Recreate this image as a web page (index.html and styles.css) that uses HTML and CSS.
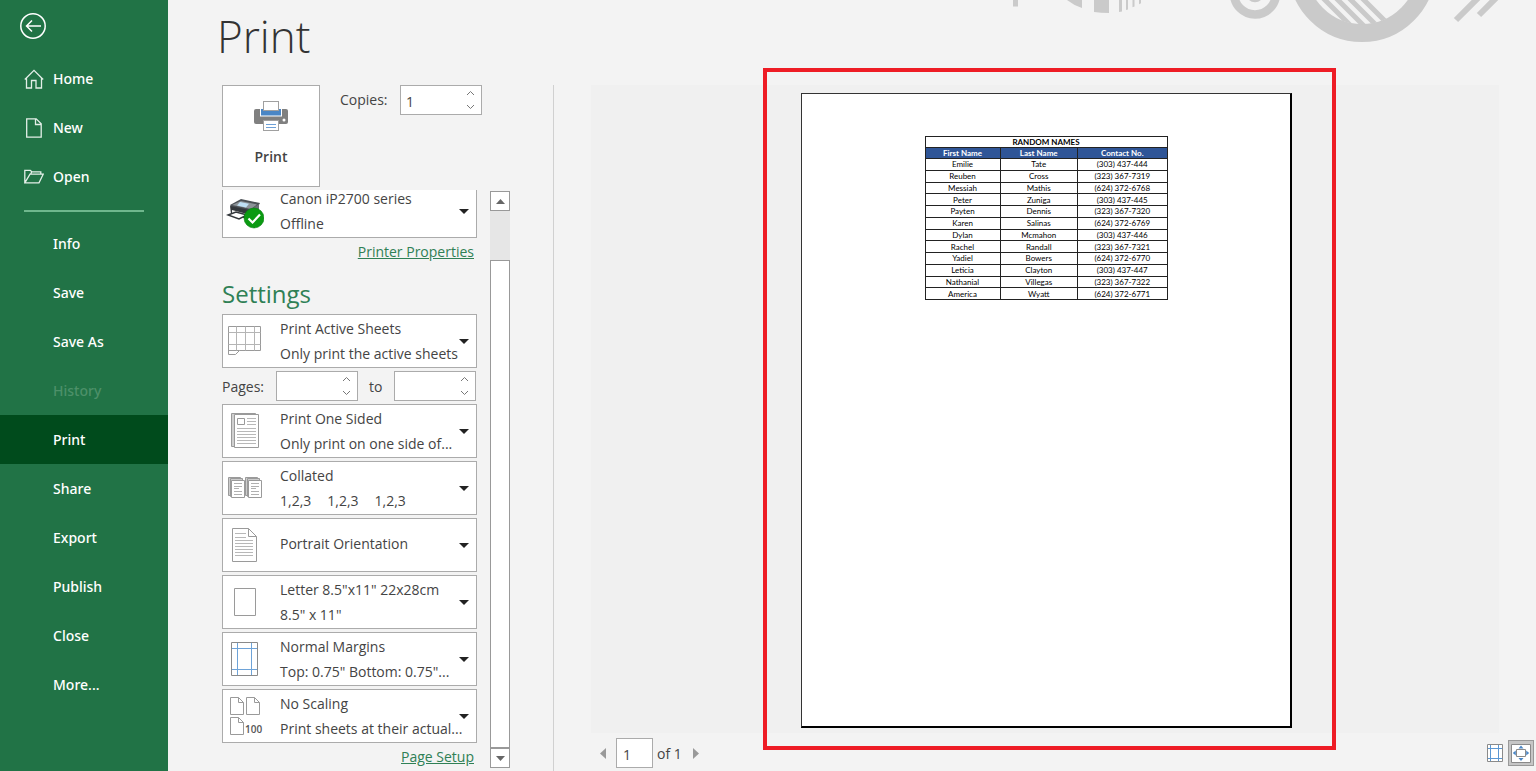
FILE: index.html
```html
<!DOCTYPE html>
<html lang="en">
<head>
<meta charset="UTF-8" />
<meta name="viewport" content="width=device-width, initial-scale=1" />
<title>Print</title>
<link rel="stylesheet" href="styles.css">
</head>
<body>

  <!-- Sidebar -->
  <nav class="sidebar">
    <button class="back" type="button" aria-label="Back">
      <svg width="28" height="28" viewBox="0 0 28 28" fill="none" stroke="#fff" stroke-width="1.5">
        <circle cx="14" cy="14" r="12.2" />
        <path d="M22 14H7.5M13 8.5L7.5 14l5.500 5.500" />
      </svg>
    </button>
    <a class="nav-item" href="#">
      <svg width="20" height="20" viewBox="0 0 20 20" fill="none" stroke="#e3efe8" stroke-width="1.3">
        <path d="M.8 10.500L10 1.300l9.200 9.200M2.500 9v10h5v-7.500h4.500V19h5.500V9" />
      </svg>
      Home
    </a>
    <a class="nav-item" href="#">
      <svg width="20" height="20" viewBox="0 0 20 20" fill="none" stroke="#e3efe8" stroke-width="1.3">
        <path d="M2.700.8h9.500l5 5v13.400H2.700zM11.500.8v5.700h5.700" />
      </svg>
      New
    </a>
    <a class="nav-item" href="#">
      <svg width="20" height="20" viewBox="0 0 20 20" fill="none" stroke="#e3efe8" stroke-width="1.3">
        <path d="M.8 15.800V3.300h5.500l1.500 1.500h9v2.400M.8 15.800L6 7.200h13.200L15 15.800zM6.500 7.200l1.300-2.400" />
      </svg>
      Open
    </a>
    <hr class="divider">
    <a class="nav-item sub" href="#">Info</a>
    <a class="nav-item sub" href="#">Save</a>
    <a class="nav-item sub" href="#">Save As</a>
    <a class="nav-item sub disabled" aria-disabled="true">History</a>
    <a class="nav-item sub active" href="#" aria-current="page">Print</a>
    <a class="nav-item sub" href="#">Share</a>
    <a class="nav-item sub" href="#">Export</a>
    <a class="nav-item sub" href="#">Publish</a>
    <a class="nav-item sub" href="#">Close</a>
    <a class="nav-item sub" href="#">More...</a>
  </nav>

  <main class="main">
    <header class="header">
      <h1>Print</h1>
      <svg class="deco" width="546" height="46" viewBox="0 0 546 46" fill="#cacaca" aria-hidden="true">
        <defs>
          <clipPath id="ring"><circle cx="372" cy="-31.500" r="56" /></clipPath>
        </defs>
        <rect x="23" y="0" width="5" height="6.500" />
        <path d="M77 0h15v8Q84 5.500 77 0zM104 0h15v13q-8 0-15-1zM129 0h3v11.500l-3 .6zM136 0h2v9.500l-2 .6zM142.500 0h2v6.500l-2 .8zM149 0h2v3.300l-2 1z" />
        <circle cx="265" cy="-6.500" r="21" fill="none" stroke="#cacaca" stroke-width="8.500" />
        <circle cx="265" cy="-6.500" r="8.800" />
        <circle cx="372" cy="-31.500" r="64.500" fill="none" stroke="#cacaca" stroke-width="18" />
        <g clip-path="url(#ring)" stroke="#cacaca" stroke-width="5">
          <path d="M325-10l50 50M338-10l50 50M351-10l50 50M364-10l50 50" />
        </g>
        <path d="M466 20l25-25M489 15l22-22" stroke="#cacaca" stroke-width="6" />
      </svg>
    </header>

    <div class="content">
      <!-- Print settings -->
      <form class="panel">
        <div class="print-row">
          <button class="print-btn" type="button">
            <svg width="34" height="32" viewBox="0 0 34 32">
              <rect x="0" y="9" width="34" height="15" rx="2" fill="#808080" />
              <path d="M6 9h22v7.500H6z" fill="#fff" />
              <path d="M7 9h20v6.500H7z" fill="#4a86c5" />
              <rect x="9.500" y="1.500" width="15" height="9" fill="#fff" stroke="#a0a0a0" />
              <rect x="9.500" y="20.500" width="15" height="10" fill="#fff" stroke="#a0a0a0" />
              <path d="M12 24.500h10M12 27.500h10" stroke="#6d9fd6" />
              <circle cx="30" cy="20" r="1.500" fill="#fff" />
            </svg>
            <span>Print</span>
          </button>
          <label class="copies-label" for="copies">Copies:</label>
          <div class="spin">
            <input id="copies" type="text" inputmode="numeric" value="1">
            <svg width="9" height="20" viewBox="0 0 9 20"><path d="M1 5l3.500-3.500L8 5M1 15l3.500 3.500L8 15" /></svg>
          </div>
        </div>

        <div class="scroll-area">
          <div class="options">
            <div class="option printer">
              <svg class="icon" width="38" height="38" viewBox="0 -5 38 38">
                <path d="M4 8L15 2l19 4-6 11-21-4z" fill="#4c5156" />
                <path d="M6 8l9-4 16 3.500-6 4.500z" fill="#8d9398" />
                <path d="M14 5l9 1.800-3 3.700-9-2z" fill="#bfe0f5" />
                <path d="M4 9l20 4v10L5 17z" fill="#33373b" />
                <path d="M24 13l9-6v10l-9 6z" fill="#6a6f74" />
                <path d="M6 13l15 4v3L6 16z" fill="#f4f4f4" />
                <path d="M2 18l8-3 11 3-8 4z" fill="#fff" stroke="#33373b" stroke-width="1.500" />
                <circle cx="28" cy="21" r="10" fill="#0b9a12" stroke="#078010" stroke-width=".6" />
                <path d="M22.500 21.500l4 4 7.500-8" fill="none" stroke="#fff" stroke-width="2.200" />
              </svg>
              <select aria-label="Printer" aria-describedby="d-printer"><option>Canon iP2700 series</option></select>
              <span class="desc" id="d-printer">Offline</span>
            </div>
            <a class="link" href="#">Printer Properties</a>

            <h2>Settings</h2>

            <div class="option">
              <svg class="icon" width="38" height="38" viewBox="0 0 38 38" fill="none" stroke="#9a9a9a">
                <path d="M2.500 4.500h32v24h-21l-4 4h-7zM2.500 28.500h11" />
                <path d="M2.500 10.500h32M2.500 22.500h32M10.500 4.500v24M19.500 4.500v24M28.500 4.500v24" stroke="#b5b5b5" />
              </svg>
              <select aria-label="Print what" aria-describedby="d-what"><option>Print Active Sheets</option></select>
              <span class="desc" id="d-what">Only print the active sheets</span>
            </div>

            <div class="pages-row">
              <label for="page-from">Pages:</label>
              <div class="spin">
                <input id="page-from" type="text" inputmode="numeric">
                <svg width="9" height="20" viewBox="0 0 9 20"><path d="M1 5l3.500-3.500L8 5M1 15l3.500 3.500L8 15" /></svg>
              </div>
              <label for="page-to">to</label>
              <div class="spin">
                <input id="page-to" type="text" inputmode="numeric">
                <svg width="9" height="20" viewBox="0 0 9 20"><path d="M1 5l3.500-3.500L8 5M1 15l3.500 3.500L8 15" /></svg>
              </div>
            </div>

            <div class="option">
              <svg class="icon" width="38" height="38" viewBox="0 0 38 38" fill="none" stroke="#9a9a9a">
                <path d="M8.500 34.500h-3v-33h24l2 2" fill="#d0d0d0" />
                <path d="M8.500 2.500h24v33h-24z" fill="#fff" />
                <path d="M11.500 6.500h7v6h-7z" />
                <path d="M21 6.500h9M21 9.500h9M21 12.500h9M11 16.500h19M11 19.500h19M11 22.500h19M11 25.500h19M11 28.500h19M11 31.500h19" stroke="#b8b8b8" />
              </svg>
              <select aria-label="Sides" aria-describedby="d-sides"><option>Print One Sided</option></select>
              <span class="desc" id="d-sides">Only print on one side of...</span>
            </div>

            <div class="option">
              <svg class="icon" width="38" height="38" viewBox="0 0 38 38" fill="none" stroke="#9a9a9a">
                <path d="M2.500 26.500v-18h12v18zM19.500 26.500v-18h12v18z" fill="#ccc" />
                <path d="M4.500 9.500h12v18h-12zM21.500 9.500h12v18h-12z" fill="#ccc" />
                <path d="M5.500 11.500h13v17h-13zM22.500 11.500h13v17h-13z" fill="#fff" />
                <path d="M8 14.500h8M8 17.500h8M8 19.500h5M8 22.500h8M8 25.500h8M25 14.500h8M25 17.500h8M25 19.500h5M25 22.500h8M25 25.500h8" stroke="#b0b0b0" />
              </svg>
              <select aria-label="Collation" aria-describedby="d-collation"><option>Collated</option></select>
              <span class="desc sets" id="d-collation"><span>1,2,3</span><span>1,2,3</span><span>1,2,3</span></span>
            </div>

            <div class="option single">
              <svg class="icon" width="38" height="38" viewBox="0 0 38 38" fill="none" stroke="#9a9a9a">
                <path d="M6.500 2.500h16l8 8v25h-24zM22.500 2.500v8h8" />
                <path d="M9 7.500h11M9 11.500h11M9 14.500h18M9 17.500h18M9 20.500h18M9 23.500h18M9 26.500h18M9 29.500h18" stroke="#b8b8b8" />
              </svg>
              <select aria-label="Orientation"><option>Portrait Orientation</option></select>
            </div>

            <div class="option">
              <svg class="icon" width="38" height="38" viewBox="0 0 38 38" fill="none" stroke="#9a9a9a">
                <path d="M8.500 5.500h21v27h-21z" />
              </svg>
              <select aria-label="Paper size" aria-describedby="d-paper"><option>Letter 8.5"x11" 22x28cm</option></select>
              <span class="desc" id="d-paper">8.5" x 11"</span>
            </div>

            <div class="option">
              <svg class="icon" width="38" height="38" viewBox="0 0 38 38" fill="none" stroke="#8a8a8a">
                <path d="M6 8.500h25M6 29.500h25M11.500 3v32M25.500 3v32" stroke="#6ea3d8" />
                <path d="M5.500 2.500h26v33h-26z" />
              </svg>
              <select aria-label="Margins" aria-describedby="d-margins"><option>Normal Margins</option></select>
              <span class="desc" id="d-margins">Top: 0.75" Bottom: 0.75"...</span>
            </div>

            <div class="option">
              <svg class="icon" width="38" height="38" viewBox="0 0 38 38" fill="none" stroke="#9a9a9a">
                <path d="M4.500.500h8l5 5v12h-13zM12.500.500v5h5M20.500.500h8l5 5v12h-13zM28.500.500v5h5M4.500 20.500h8l5 5v12h-13zM12.500 20.500v5h5" />
                <text x="19" y="36" font-size="10" font-weight="600" fill="#555" stroke="none">100</text>
              </svg>
              <select aria-label="Scaling" aria-describedby="d-scaling"><option>No Scaling</option></select>
              <span class="desc" id="d-scaling">Print sheets at their actual...</span>
            </div>
            <a class="link" href="#">Page Setup</a>
          </div>

          <div class="scrollbar">
            <button type="button" aria-label="Scroll up"><svg width="9" height="5" viewBox="0 0 9 5"><path d="M0 5L4.500 0 9 5z" /></svg></button>
            <div class="track"><div class="thumb"></div></div>
            <button type="button" aria-label="Scroll down"><svg width="9" height="5" viewBox="0 0 9 5"><path d="M0 0l4.500 5L9 0z" /></svg></button>
          </div>
        </div>
      </form>

      <!-- Preview -->
      <section class="preview">
        <div class="canvas">
          <div class="page">
            <table>
              <colgroup>
                <col class="first">
                <col class="last">
                <col>
              </colgroup>
              <thead>
                <tr><th colspan="3">RANDOM NAMES</th></tr>
                <tr class="cols"><th>First Name</th><th>Last Name</th><th>Contact No.</th></tr>
              </thead>
              <tbody>
                <tr><td>Emilie</td><td>Tate</td><td>(303) 437-444</td></tr>
                <tr><td>Reuben</td><td>Cross</td><td>(323) 367-7319</td></tr>
                <tr><td>Messiah</td><td>Mathis</td><td>(624) 372-6768</td></tr>
                <tr><td>Peter</td><td>Zuniga</td><td>(303) 437-445</td></tr>
                <tr><td>Payten</td><td>Dennis</td><td>(323) 367-7320</td></tr>
                <tr><td>Karen</td><td>Salinas</td><td>(624) 372-6769</td></tr>
                <tr><td>Dylan</td><td>Mcmahon</td><td>(303) 437-446</td></tr>
                <tr><td>Rachel</td><td>Randall</td><td>(323) 367-7321</td></tr>
                <tr><td>Yadiel</td><td>Bowers</td><td>(624) 372-6770</td></tr>
                <tr><td>Leticia</td><td>Clayton</td><td>(303) 437-447</td></tr>
                <tr><td>Nathanial</td><td>Villegas</td><td>(323) 367-7322</td></tr>
                <tr><td>America</td><td>Wyatt</td><td>(624) 372-6771</td></tr>
              </tbody>
            </table>
            <div class="highlight"></div>
          </div>
        </div>

        <footer class="pager">
          <button class="arrow" type="button" aria-label="Previous page"><svg width="6" height="11" viewBox="0 0 6 11"><path d="M6 0v11L0 5.500z" /></svg></button>
          <input class="page-no" id="page-no" type="text" value="1" aria-label="Current page">
          <label for="page-no">of 1</label>
          <button class="arrow" type="button" aria-label="Next page"><svg width="6" height="11" viewBox="0 0 6 11"><path d="M0 0v11l6-5.500z" /></svg></button>
          <div class="views">
            <button type="button" aria-label="Show margins">
              <svg width="16" height="18" viewBox="0 0 16 18" fill="none">
                <path d="M.500.500h15v17H.500z" fill="#fff" stroke="#8a8a8a" />
                <path d="M1 4.500h14M1 14.500h14M3.500 1v16M11.500 1v16" stroke="#5b97d3" />
              </svg>
            </button>
            <button class="on" type="button" aria-label="Zoom to page">
              <svg width="20" height="19" viewBox="0 0 20 19">
                <path d="M.500.500h19v18H.500z" fill="#fff" stroke="#8a8a8a" />
                <path d="M5.500 5.500h9v7h-9z" fill="#fff" stroke="#8a8a8a" />
                <path d="M10 1.500l2.500 3h-5zM10 17l2.500-3h-5zM1.800 9l3-2.500v5zM18.200 9l-3-2.500v5z" fill="#4a86c5" />
              </svg>
            </button>
          </div>
        </footer>
      </section>
    </div>
  </main>

</body>
</html>
```
FILE: styles.css
```css
* {
  box-sizing: border-box;
}

body {
  margin: 0;
  height: 100vh;
  display: flex;
  overflow: hidden;
  background: #f3f3f3;
  color: #444;
  font-family: "Open Sans", "Segoe UI", sans-serif;
  font-size: 14px;
}

button,
input,
select {
  font: inherit;
  color: inherit;
}

button {
  padding: 0;
  display: flex;
  align-items: center;
  justify-content: center;
  border: none;
  background: none;
  cursor: pointer;
}

/* Sidebar */
.sidebar {
  flex: 0 0 168px;
  background: #217346;
  font-family: "Noto Sans", "Segoe UI", sans-serif;
}

.back {
  margin: 12px 0 14px 19px;
}

.nav-item {
  height: 49px;
  padding-left: 24px;
  display: flex;
  align-items: center;
  gap: 9px;
  color: #fff;
  font-weight: 500;
  text-decoration: none;
}

.nav-item.sub {
  padding-left: 53px;
}

.nav-item.disabled {
  color: #4d9069;
}

.nav-item.active {
  background: #004b1c;
}

.divider {
  height: 2px;
  margin: 9px 24px 7px;
  border: none;
  background: #6fb78d;
}

/* Header */
.main {
  flex: 1;
  min-width: 0;
  display: flex;
  flex-direction: column;
}

.header {
  height: 85px;
  padding-left: 49px;
  display: flex;
  justify-content: space-between;
}

h1 {
  margin: 4px 0 0;
  color: #333;
  font-size: 44px;
  font-weight: 300;
  line-height: 64px;
}

.content {
  flex: 1;
  min-height: 0;
  display: flex;
}

/* Settings panel */
.panel {
  flex: 0 0 386px;
  padding-left: 54px;
  display: flex;
  flex-direction: column;
  border-right: 1px solid #d0d0d0;
}

.print-row {
  display: flex;
  align-items: flex-start;
}

.print-btn {
  width: 98px;
  height: 102px;
  padding-bottom: 6px;
  flex-direction: column;
  gap: 15px;
  border: 1px solid #ababab;
  background: #fff;
  font-weight: 600;
}

.copies-label {
  width: 60px;
  margin-left: 20px;
  line-height: 30px;
}

.spin {
  width: 82px;
  height: 30px;
  padding-right: 6px;
  display: flex;
  align-items: center;
  border: 1px solid #ababab;
  background: #fff;
}

.spin input {
  flex: 1;
  min-width: 0;
  padding: 2px 5px 0;
  border: none;
  outline: none;
  background: none;
}

.spin svg {
  fill: none;
  stroke: #777;
}

.scroll-area {
  flex: 1;
  min-height: 0;
  margin-top: 3px;
  display: flex;
  gap: 13px;
}

.options {
  width: 255px;
  display: flex;
  flex-direction: column;
  gap: 3px;
  overflow: hidden;
}

.option {
  flex: none;
  height: 54px;
  display: grid;
  grid-template-columns: 57px 1fr;
  grid-template-rows: 26px 26px;
  border: 1px solid #ababab;
  background: #fff;
}

.option.printer {
  margin-top: -6px;
}

.option .icon {
  grid-area: 1 / 1 / 3 / 2;
  align-self: center;
  margin-left: 3px;
}

/* The select fills the whole card, the description sits under its value */
.option select {
  grid-area: 1 / 1 / 3 / 3;
  padding: 0 24px 26px 57px;
  appearance: none;
  border: none;
  background: none;
  cursor: pointer;
}

.option::after {
  content: "";
  grid-area: 1 / 2 / 3 / 3;
  place-self: center end;
  margin-right: 7px;
  border: 5px solid transparent;
  border-top-color: #222;
  border-bottom: none;
  pointer-events: none;
}

.option.single select {
  padding-bottom: 3px;
}

.option .desc {
  grid-area: 2 / 2 / 3 / 3;
  line-height: 26px;
  white-space: nowrap;
  pointer-events: none;
}

.option .sets {
  display: flex;
  gap: 16px;
}

.link {
  align-self: flex-end;
  margin-right: 3px;
  color: #2f8055;
  line-height: 22px;
}

h2 {
  margin: 11px 0 0;
  color: #2f8055;
  font-size: 24px;
  font-weight: 400;
  line-height: 34px;
}

.pages-row {
  display: flex;
  align-items: center;
  justify-content: space-between;
  padding-right: 1px;
}

/* Scrollbar */
.scrollbar {
  width: 20px;
  margin: 1px 0 3px;
  display: flex;
  flex-direction: column;
}

.scrollbar button {
  height: 20px;
  border: 1px solid #999;
  background: #fff;
}

.scrollbar svg {
  fill: #666;
}

.track {
  flex: 1;
  padding-top: 49px;
  display: flex;
  background: #e6e6e6;
}

.thumb {
  flex: 1;
  border: 1px solid #999;
  background: #fff;
}

/* Preview */
.preview {
  flex: 1;
  min-width: 0;
  display: flex;
  flex-direction: column;
}

.canvas {
  flex: 1;
  min-height: 0;
  margin: 0 37px;
  padding: 8px 0 5px 3px;
  display: flex;
  justify-content: center;
  background: #f0f0f0;
}

.page {
  position: relative;
  height: 100%;
  aspect-ratio: 491 / 635;
  padding-top: 42px;
  border: 1px solid #333;
  border-width: 1px 2px 2px 1px;
  border-color: #333 #000 #000 #333;
  background: #fff;
}

/* Red frame around the page */
.highlight {
  position: absolute;
  inset: -26px -46px -24px -39px;
  border: 4px solid #ee1c25;
}

table {
  width: 243px;
  height: 164px;
  margin: 0 auto;
  border-collapse: collapse;
  table-layout: fixed;
  color: #000;
  font-family: Lato, Calibri, sans-serif;
  font-size: 8px;
  line-height: 10px;
  text-align: center;
}

th,
td {
  padding: 0;
  border: 1px solid #222;
}

.cols th {
  background: #2f5597;
  color: #fff;
}

.first {
  width: 31%;
}

.last {
  width: 32%;
}

.pager {
  height: 38px;
  padding: 2px 2px 0 45px;
  display: flex;
  align-items: center;
}

.arrow {
  width: 8px;
  height: 20px;
}

.arrow svg {
  fill: #999;
}

.page-no {
  width: 37px;
  height: 30px;
  margin: 0 4px 0 9px;
  padding: 2px 6px 0;
  border: 1px solid #ababab;
  background: #fff;
}

.pager label {
  margin-right: 10px;
}

.views {
  margin-left: auto;
  display: flex;
  align-items: center;
  gap: 5px;
}

.views .on {
  width: 26px;
  height: 26px;
  border: 1px solid #999;
  background: #c6c6c6;
}
```
